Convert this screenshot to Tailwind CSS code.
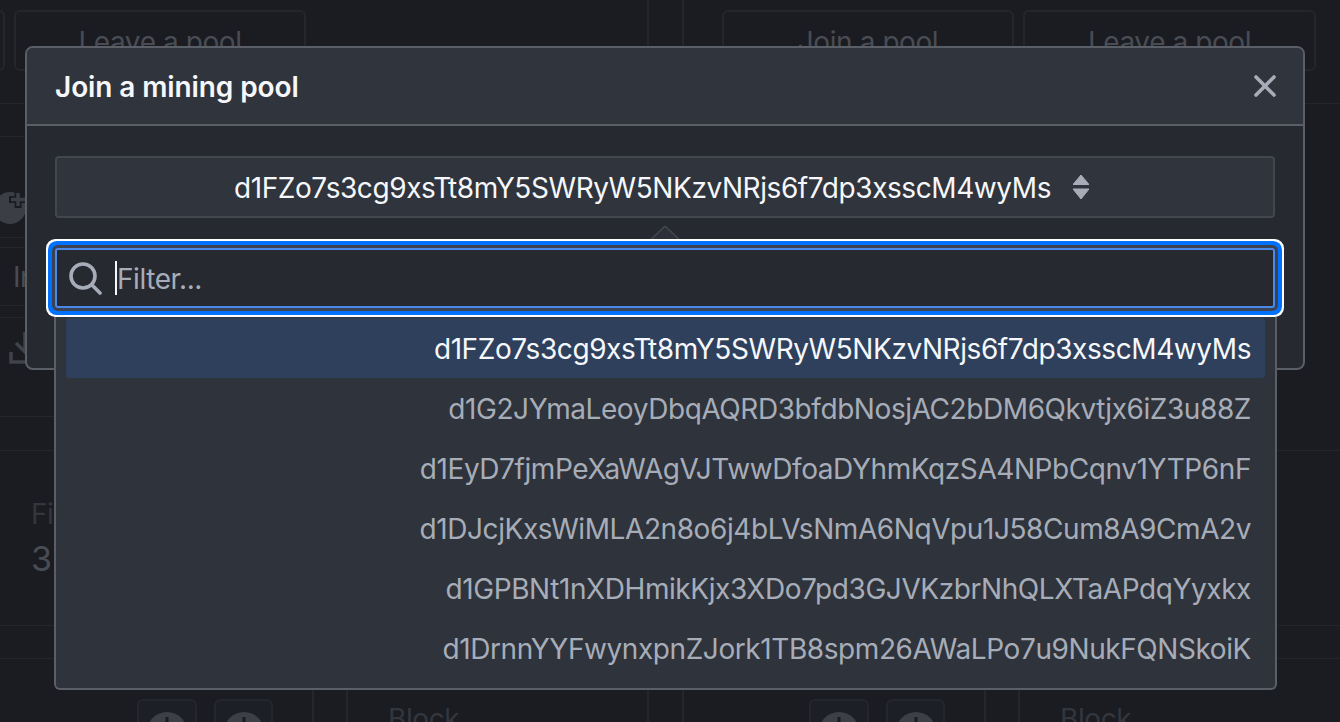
<!DOCTYPE html>
<html lang="en">
<head>
  <meta charset="UTF-8">
  <title>Join a mining pool</title>
  <script src="https://cdn.jsdelivr.net/npm/@tailwindcss/browser@4"></script>
</head>
<body class="relative h-[722px] w-[1340px] overflow-hidden bg-[#1a1c21] font-['Inter',sans-serif] text-[28px] tracking-[-0.42px] text-[#f5f7fa]">

  <!-- Dimmed page behind the modal -->
  <div class="grid h-full grid-cols-[649px_33px_658px] text-[#494c54]">
    <section class="flex flex-col border-r-2 border-[#24262c]">
      <div class="flex h-[104px] shrink-0 gap-[9px] border-b border-[#24262c] pt-[10px]">
        <div class="-ml-[286px] h-[61px] w-[291px] rounded-md border-2 border-[#24262c]"></div>
        <div class="flex h-[61px] w-[292px] justify-center rounded-md border-2 border-[#24262c] pt-[13px] leading-[34px]">Leave a pool</div>
      </div>
      <div class="h-[33px] shrink-0 border-b border-[#24262c]"></div>
      <div class="h-[101px] shrink-0 border-b border-[#24262c] pt-[53px]">
        <svg class="h-[34px] w-[30px]" viewBox="0 0 30 34">
          <circle cx="10" cy="18" r="16" fill="#3b3e45"/>
          <path d="M18 1V18M9 9.500H27" stroke="#1a1c21" stroke-width="7"/>
          <path d="M18 3V16M11 9.500H25" stroke="#3b3e45" stroke-width="3.500"/>
        </svg>
      </div>
      <div class="h-[10px] shrink-0 border-b border-[#24262c]"></div>
      <div class="h-[58px] shrink-0 border-b border-[#24262c] pl-[13px] leading-[58px]">In</div>
      <div class="h-[12px] shrink-0 border-b border-[#24262c]"></div>
      <div class="h-[99px] shrink-0 border-b border-[#24262c] pl-[8px] pt-[12px]">
        <svg class="h-[34px] w-[34px]" viewBox="0 0 34 34" fill="none" stroke="#3f4249" stroke-width="3.5">
          <path d="M3 22V32H33M17 2V22M8 13 17 22 26 13"/>
        </svg>
      </div>
      <div class="h-[34px] shrink-0 border-b border-[#24262c]"></div>
      <div class="flex h-[175px] shrink-0 flex-col border-b border-[#24262c] pl-[31px] pt-[46px]">
        <span class="leading-[34px] text-[#33363d]">Fi</span>
        <span class="mt-[8px] text-[34px] leading-[40px]">3</span>
      </div>
      <div class="h-[33px] shrink-0 border-b border-[#24262c]"></div>
      <div class="flex flex-1 items-stretch pl-[137px] pt-[40px]">
        <div class="flex h-[40px] w-[60px] justify-center rounded-t-md border-2 border-b-0 border-[#24262c] bg-[#1c1f26] pt-[11px]">
          <svg class="h-[40px] w-[40px] shrink-0" viewBox="0 0 40 40"><circle cx="20" cy="20" r="20" fill="#3c3f46"/><path d="M20 5V16" stroke="#1a1c21" stroke-width="3"/></svg>
        </div>
        <div class="ml-[17px] flex h-[40px] w-[59px] justify-center rounded-t-md border-2 border-b-0 border-[#24262c] bg-[#1c1f26] pt-[11px]">
          <svg class="h-[40px] w-[40px] shrink-0" viewBox="0 0 40 40"><circle cx="20" cy="20" r="20" fill="#3c3f46"/><path d="M20 5V16" stroke="#1a1c21" stroke-width="3"/></svg>
        </div>
        <div class="-mt-[40px] ml-[39px] w-[36px] border-x-2 border-[#24262c]"></div>
        <span class="ml-[40px] mt-[3px] leading-[34px] text-[#33363d]">Block</span>
      </div>
    </section>
    <div></div>
    <section class="flex flex-col border-l-2 border-[#24262c]">
      <div class="flex h-[104px] shrink-0 gap-[9px] border-b border-[#24262c] pl-[38px] pt-[10px]">
        <div class="flex h-[61px] w-[292px] justify-center rounded-md border-2 border-[#24262c] pt-[13px] leading-[34px]">Join a pool</div>
        <div class="flex h-[61px] w-[293px] justify-center rounded-md border-2 border-[#24262c] pt-[13px] leading-[34px]">Leave a pool</div>
      </div>
      <div class="h-[347px] shrink-0 border-b border-[#24262c]"></div>
      <div class="h-[175px] shrink-0 border-b border-[#24262c]"></div>
      <div class="h-[33px] shrink-0 border-b border-[#24262c]"></div>
      <div class="flex flex-1 items-stretch pl-[125px] pt-[40px]">
        <div class="flex h-[40px] w-[60px] justify-center rounded-t-md border-2 border-b-0 border-[#24262c] bg-[#1c1f26] pt-[11px]">
          <svg class="h-[40px] w-[40px] shrink-0" viewBox="0 0 40 40"><circle cx="20" cy="20" r="20" fill="#3c3f46"/><path d="M20 5V16" stroke="#1a1c21" stroke-width="3"/></svg>
        </div>
        <div class="ml-[17px] flex h-[40px] w-[59px] justify-center rounded-t-md border-2 border-b-0 border-[#24262c] bg-[#1c1f26] pt-[11px]">
          <svg class="h-[40px] w-[40px] shrink-0" viewBox="0 0 40 40"><circle cx="20" cy="20" r="20" fill="#3c3f46"/><path d="M20 5V16" stroke="#1a1c21" stroke-width="3"/></svg>
        </div>
        <div class="-mt-[40px] ml-[39px] w-[36px] border-x-2 border-[#24262c]"></div>
        <span class="ml-[40px] mt-[3px] leading-[34px] text-[#33363d]">Block</span>
      </div>
    </section>
  </div>

  <!-- Modal -->
  <div class="absolute left-[25px] top-[46px] h-[324px] w-[1280px] overflow-hidden rounded-lg border-2 border-[#5a5e67] bg-[#262930]">
    <header class="flex h-[78px] items-center justify-between border-b-2 border-[#5a5e67] bg-[#30343c] pl-[28px] pr-[27px]">
      <h1 class="pt-[2px] text-[28px] font-semibold tracking-[-0.1px]">Join a mining pool</h1>
      <svg class="h-[22px] w-[22px] text-[#a7adb8]" viewBox="0 0 22 22" fill="none" stroke="currentColor" stroke-width="3.6" stroke-linecap="round">
        <path d="M2 2 20 20M20 2 2 20"/>
      </svg>
    </header>
    <div class="pl-[28px] pt-[30px]">
      <button class="flex h-[62px] w-[1220px] items-center justify-center gap-[22px] rounded-[4px] border-2 border-[#42464e] bg-[#30343c] pr-[7px]">
        <span class="pt-[2px]">d1FZo7s3cg9xsTt8mY5SWRyW5NKzvNRjs6f7dp3xsscM4wyMs</span>
        <svg class="h-[24px] w-[16px] text-[#a7adb8]" viewBox="0 0 16 24" fill="currentColor">
          <path d="M8 0 16 9.5H0zM0 14H16L8 24z" stroke="currentColor" stroke-linejoin="round"/>
        </svg>
      </button>
    </div>
  </div>

  <!-- Filter popover -->
  <div class="absolute left-[54px] top-[248px] w-[1223px]">
    <svg class="absolute left-[588px] top-[-22px] h-[22px] w-[46px]" viewBox="0 0 46 22" fill="#2d3038" stroke="#43474f" stroke-width="1.5">
      <path d="M0 22 23 0 46 22"/>
    </svg>
    <div class="relative z-10 ml-[1px] flex h-[60px] w-[1220px] items-center rounded-[3px] border-2 border-[#4a88ea] bg-[#262930] px-[12px] shadow-[0_0_0_3px_#3b4353,0_0_0_7px_#0072ff,0_0_0_9px_#ffffff]">
      <svg class="h-[33px] w-[33px] shrink-0 text-[#a7adb8]" viewBox="0 0 33 33" fill="none" stroke="currentColor" stroke-width="3.6" stroke-linecap="round">
        <circle cx="14" cy="14" r="12"/>
        <path d="M23 23 31 31"/>
      </svg>
      <span class="ml-[13px] h-[34px] w-[2px] shrink-0 bg-[#f5f7fa]"></span>
      <span class="pt-[2px] text-[#a7adb8]">Filter...</span>
    </div>
    <ul class="-mt-[1px] flex h-[383px] flex-col rounded-b-md border-2 border-t-0 border-[#5a5e67] bg-[#2f333b] px-[10px] pt-[11px] text-right leading-[62px] text-[#a7adb8]">
      <li class="h-[60px] rounded-[3px] bg-[#2e405c] px-[14px] text-[#f5f7fa]">d1FZo7s3cg9xsTt8mY5SWRyW5NKzvNRjs6f7dp3xsscM4wyMs</li>
      <li class="h-[60px] px-[14px]">d1G2JYmaLeoyDbqAQRD3bfdbNosjAC2bDM6Qkvtjx6iZ3u88Z</li>
      <li class="h-[60px] px-[14px]">d1EyD7fjmPeXaWAgVJTwwDfoaDYhmKqzSA4NPbCqnv1YTP6nF</li>
      <li class="h-[60px] px-[14px]">d1DJcjKxsWiMLA2n8o6j4bLVsNmA6NqVpu1J58Cum8A9CmA2v</li>
      <li class="h-[60px] px-[14px]">d1GPBNt1nXDHmikKjx3XDo7pd3GJVKzbrNhQLXTaAPdqYyxkx</li>
      <li class="h-[60px] px-[14px]">d1DrnnYYFwynxpnZJork1TB8spm26AWaLPo7u9NukFQNSkoiK</li>
    </ul>
  </div>
</body>
</html>
